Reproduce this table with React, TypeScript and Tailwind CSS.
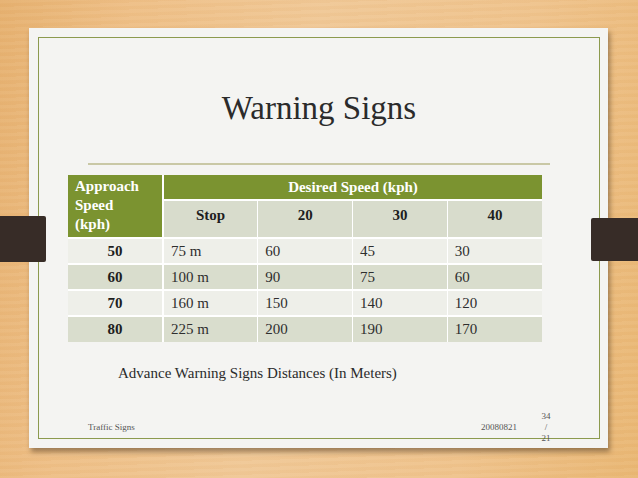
export default function App() {
  const cols = ['Stop', '20', '30', '40'];
  const rows = [
    ['50', '75 m', '60', '45', '30'],
    ['60', '100 m', '90', '75', '60'],
    ['70', '160 m', '150', '140', '120'],
    ['80', '225 m', '200', '190', '170'],
  ];
  const serif = "font-['Liberation_Serif','DejaVu_Serif',serif]";

  return (
    <div
      className={`relative w-[638px] h-[478px] overflow-hidden pt-[28px] pl-[29px] ${serif} bg-[linear-gradient(100deg,#e6b170_0%,#eebf86_18%,#f0c896_45%,#efc38c_75%,#e9b774_100%)]`}
    >
      {/* wood grain */}
      <div className="absolute inset-0 opacity-25 bg-[repeating-linear-gradient(178deg,rgba(255,255,255,0.15)_0px,rgba(255,255,255,0.15)_3px,rgba(190,120,50,0.12)_4px,rgba(190,120,50,0.12)_7px)]" />

      {/* paper */}
      <div className="relative w-[579px] h-[420px] bg-[#f4f4f2] pt-[9px] pr-[8px] pb-[9px] pl-[9px] shadow-[2px_4px_5px_rgba(60,40,20,0.45)]">
        <div className="h-full border-[1.5px] border-[#8c9a4e] flex flex-col">
          <h1 className="mt-[54px] text-center text-[33px] leading-none text-[#2b2b2b] font-normal">
            Warning Signs
          </h1>
          <div className="mt-[38px] ml-[49px] w-[462px] h-[2px] bg-[#c9c8a6]" />

          <table className="mt-[10px] ml-[29px] w-[474px] table-fixed border-collapse text-[15px]">
            <tbody>
              <tr className="h-[24px]">
                <td
                  rowSpan={2}
                  className="align-top bg-[#7b9330] text-white font-bold leading-[19px] pl-[7px] pt-[2px] border-r-2 border-white w-[95px]"
                >
                  Approach
                  <br />
                  Speed
                  <br />
                  (kph)
                </td>
                <td colSpan={4} className="bg-[#7b9330] text-white font-bold text-center leading-[24px] border-b-2 border-white">
                  Desired Speed (kph)
                </td>
              </tr>
              <tr className="h-[38px]">
                {cols.map(c => (
                  <td key={c} className="align-top pt-[3px] bg-[#d8dccc] text-[#1e1e1e] font-bold text-center border-l border-white first:border-l-0">
                    {c}
                  </td>
                ))}
              </tr>
              {rows.map((r, i) => (
                <tr key={r[0]} className={`h-[26px] border-t-2 border-white ${i % 2 ? 'bg-[#d9ddcd]' : 'bg-[#eeefe9]'}`}>
                  {r.map((v, j) => (
                    <td
                      key={j}
                      className={
                        j === 0
                          ? 'text-center font-bold text-[#1e1e1e] border-r-2 border-white'
                          : 'pl-[7px] text-[#2e2e2e] border-l border-white'
                      }
                    >
                      {v}
                    </td>
                  ))}
                </tr>
              ))}
            </tbody>
          </table>

          <p className="mt-[22px] ml-[79px] text-[15px] leading-[18px] text-[#2b2b2b]">
            Advance Warning Signs Distances (In Meters)
          </p>

          <div className="mt-auto mb-[-6px] flex items-center pl-[49px] pr-[46px] text-[9px] text-[#555]">
            <span>Traffic Signs</span>
            <span className="ml-auto">20080821</span>
            <span className="ml-[22px] w-[14px] flex flex-col items-center leading-[11px]">
              <span>34</span>
              <span>/</span>
              <span>21</span>
            </span>
          </div>
        </div>
      </div>

      {/* binder tabs */}
      <div className="absolute left-0 top-[216px] w-[46px] h-[46px] bg-[#372c27] rounded-r-[2px]" />
      <div className="absolute left-[591px] top-[218px] w-[47px] h-[43px] bg-[#372c27] rounded-l-[2px]" />
    </div>
  );
}
